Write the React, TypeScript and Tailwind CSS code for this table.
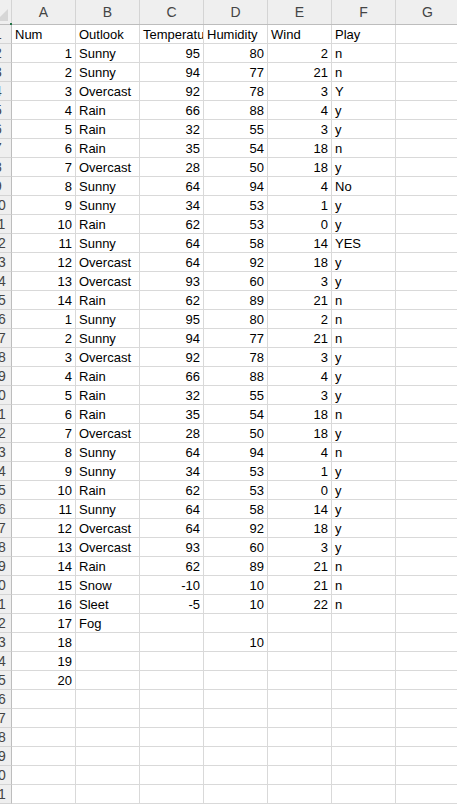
import React from 'react';

const cols = ['A', 'B', 'C', 'D', 'E', 'F', 'G'];

type Row = (string | number | null)[];

const data: Row[] = [
  ['Num', 'Outlook', 'Temperature', 'Humidity', 'Wind', 'Play'],
  [1, 'Sunny', 95, 80, 2, 'n'],
  [2, 'Sunny', 94, 77, 21, 'n'],
  [3, 'Overcast', 92, 78, 3, 'Y'],
  [4, 'Rain', 66, 88, 4, 'y'],
  [5, 'Rain', 32, 55, 3, 'y'],
  [6, 'Rain', 35, 54, 18, 'n'],
  [7, 'Overcast', 28, 50, 18, 'y'],
  [8, 'Sunny', 64, 94, 4, 'No'],
  [9, 'Sunny', 34, 53, 1, 'y'],
  [10, 'Rain', 62, 53, 0, 'y'],
  [11, 'Sunny', 64, 58, 14, 'YES'],
  [12, 'Overcast', 64, 92, 18, 'y'],
  [13, 'Overcast', 93, 60, 3, 'y'],
  [14, 'Rain', 62, 89, 21, 'n'],
  [1, 'Sunny', 95, 80, 2, 'n'],
  [2, 'Sunny', 94, 77, 21, 'n'],
  [3, 'Overcast', 92, 78, 3, 'y'],
  [4, 'Rain', 66, 88, 4, 'y'],
  [5, 'Rain', 32, 55, 3, 'y'],
  [6, 'Rain', 35, 54, 18, 'n'],
  [7, 'Overcast', 28, 50, 18, 'y'],
  [8, 'Sunny', 64, 94, 4, 'n'],
  [9, 'Sunny', 34, 53, 1, 'y'],
  [10, 'Rain', 62, 53, 0, 'y'],
  [11, 'Sunny', 64, 58, 14, 'y'],
  [12, 'Overcast', 64, 92, 18, 'y'],
  [13, 'Overcast', 93, 60, 3, 'y'],
  [14, 'Rain', 62, 89, 21, 'n'],
  [15, 'Snow', -10, 10, 21, 'n'],
  [16, 'Sleet', -5, 10, 22, 'n'],
  [17, 'Fog'],
  [18, null, null, 10],
  [19],
  [20],
];

const TOTAL_ROWS = 41;

function Cell({ value }: { value: string | number | null | undefined }) {
  const isNum = typeof value === 'number';
  return (
    <div
      className={`h-[19px] w-[64px] shrink-0 overflow-hidden whitespace-nowrap border-r border-b border-[#d9d9d9] px-[3px] text-[13px] leading-[19px] text-black ${
        isNum ? 'text-right' : 'text-left'
      }`}
    >
      {value ?? ''}
    </div>
  );
}

export default function App() {
  const rows = Array.from({ length: TOTAL_ROWS }, (_, i) => data[i] ?? []);

  return (
    <div className="h-[804px] w-[457px] overflow-hidden bg-white font-['Liberation_Sans',Arial,sans-serif]">
      <div className="ml-[-15px] flex w-max flex-col">
        {/* column letters */}
        <div className="flex h-[25px] border-b border-[#bdbdbd] bg-[#efefef]">
          <div className="relative h-full w-[27px] shrink-0 border-r border-[#d4d4d4]">
            <svg className="absolute right-[3px] bottom-[3px]" width="12" height="12" viewBox="0 0 12 12">
              <polygon points="12,0 12,12 0,12" fill="#d6d6d6" />
            </svg>
            <div className="absolute right-[-1px] bottom-[-1px] h-[2px] w-[2px] bg-[#217346]" />
          </div>
          {cols.map((c) => (
            <div
              key={c}
              className="flex h-full w-[64px] shrink-0 items-center justify-center border-r border-[#d4d4d4] text-[14px] text-[#444]"
            >
              {c}
            </div>
          ))}
        </div>

        {rows.map((row, i) => (
          <div key={i} className="flex">
            <div className="h-[19px] w-[27px] shrink-0 border-r border-b border-r-[#bdbdbd] border-b-[#d4d4d4] bg-[#efefef] text-center text-[14px] leading-[19px] text-[#444]">
              {i + 1}
            </div>
            {cols.map((c, j) => (
              <Cell key={c} value={row[j]} />
            ))}
          </div>
        ))}
      </div>
    </div>
  );
}
